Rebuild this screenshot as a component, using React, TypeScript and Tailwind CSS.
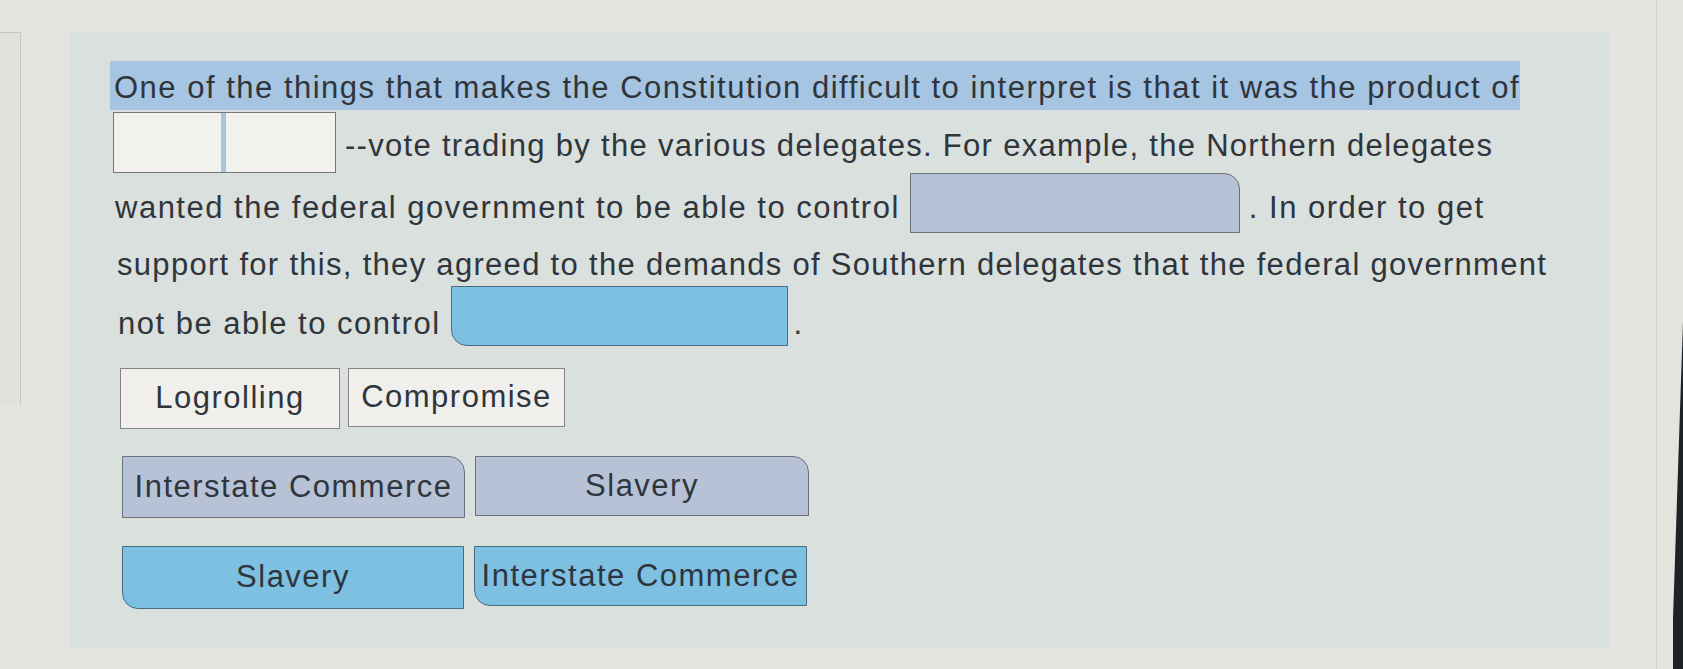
import React from "react";

const font = "font-['Liberation_Sans',Arial,sans-serif]";

function Tile({
  label,
  variant,
  w,
  h,
}: {
  label: string;
  variant: "plain" | "gray" | "blue";
  w: string;
  h: string;
}) {
  const cls =
    variant === "plain"
      ? "bg-[#f0efeb] border-[1.5px] border-[#858585]"
      : variant === "gray"
      ? "bg-[#b8c2d6] border-[1.5px] border-[#6a707c] rounded-tr-[16px]"
      : "bg-[#7dc0e2] border-[1.5px] border-[#4a6b80] rounded-bl-[16px]";
  return (
    <div
      className={`${cls} ${w} ${h} flex items-center justify-center text-[31px] tracking-[1.5px] text-[#2f353d] whitespace-nowrap`}
    >
      {label}
    </div>
  );
}

export default function App() {
  return (
    <div
      className={`${font} relative flex h-[669px] w-full overflow-hidden bg-[#e4e3dd] text-[#30353c]`}
    >
      {/* left faint frame */}
      <div className="mt-[32px] h-[372px] w-[21px] shrink-0 border-t border-r border-[#c6c5bf] bg-[#e1e0da]" />
      <div className="w-[48px] shrink-0" />
      {/* main panel */}
      <div className="mt-[32px] flex h-[617px] w-[1540px] shrink-0 flex-col bg-[#d9e0dd] pl-[41px] pt-[29px]">
        {/* line 1 */}
        <div className="flex">
          <div className="h-[49px] w-[1410px] whitespace-nowrap bg-[#a6c5e2] pl-[4px] pt-[2px] text-[31px] leading-[49px] tracking-[1.5px]">
            One of the things that makes the Constitution difficult to interpret is that it was the product of
          </div>
        </div>
        {/* line 2 */}
        <div className="mt-[2px] flex h-[61px] items-center whitespace-nowrap text-[31px] tracking-[1.3px]">
          <div className="ml-[3px] flex h-[61px] w-[223px] border-[1.5px] border-[#767676] bg-[#f2f1ed]">
            <div className="w-[107px]" />
            <div className="h-full w-[5px] bg-[#a6c5e2]" />
          </div>
          <span className="ml-[9px] pt-[8px]">--vote trading by the various delegates. For example, the Northern delegates</span>
        </div>
        {/* line 3 */}
        <div className="flex h-[60px] items-center whitespace-nowrap text-[31px] tracking-[1.5px]">
          <span className="ml-[5px] pt-[10px]">wanted the federal government to be able to control</span>
          <div className="ml-[10px] h-[60px] w-[330px] rounded-tr-[16px] border-[1.5px] border-[#6a707c] bg-[#b8c2d6]" />
          <span className="ml-[9px] pt-[10px]">. In order to get</span>
        </div>
        {/* line 4 */}
        <div className="flex h-[53px] items-center whitespace-nowrap text-[31px] tracking-[1.3px]">
          <span className="ml-[7px] pt-[12px]">support for this, they agreed to the demands of Southern delegates that the federal government</span>
        </div>
        {/* line 5 */}
        <div className="flex h-[60px] items-center whitespace-nowrap text-[31px] tracking-[1.5px]">
          <span className="ml-[8px] pt-[16px]">not be able to control</span>
          <div className="ml-[10px] h-[60px] w-[337px] rounded-bl-[16px] border-[1.5px] border-[#4a6b80] bg-[#7dc0e2]" />
          <span className="ml-[6px] pt-[16px]">.</span>
        </div>

        {/* tiles */}
        <div className="ml-[10px] mt-[22px] flex flex-col">
          <div className="flex items-start gap-[8px]">
            <Tile label="Logrolling" variant="plain" w="w-[220px]" h="h-[61px]" />
            <Tile label="Compromise" variant="plain" w="w-[217px]" h="h-[59px]" />
          </div>
          <div className="ml-[2px] mt-[27px] flex items-start gap-[10px]">
            <Tile label="Interstate Commerce" variant="gray" w="w-[343px]" h="h-[62px]" />
            <Tile label="Slavery" variant="gray" w="w-[334px]" h="h-[60px]" />
          </div>
          <div className="ml-[2px] mt-[28px] flex items-start gap-[10px]">
            <Tile label="Slavery" variant="blue" w="w-[342px]" h="h-[63px]" />
            <Tile label="Interstate Commerce" variant="blue" w="w-[333px]" h="h-[60px]" />
          </div>
        </div>
      </div>
      {/* right margin with faint line */}
      <div className="w-[47px] shrink-0" />
      <div className="h-full w-px shrink-0 bg-[#d2d1cb]" />
      <div className="flex-1 bg-[linear-gradient(to_right,#e4e3dd_60%,#1e2226_60%)] [clip-path:polygon(100%_48%,100%_100%,55%_100%)]" />
    </div>
  );
}
